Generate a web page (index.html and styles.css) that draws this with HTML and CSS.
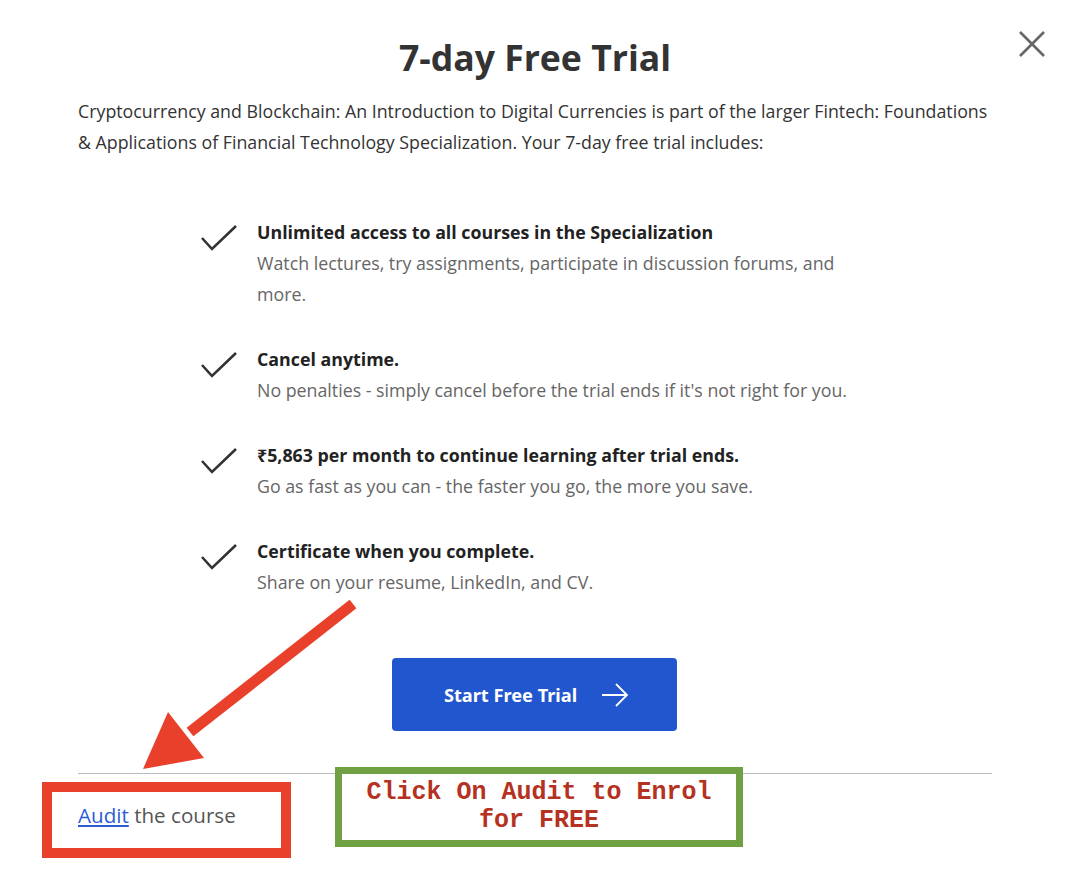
FILE: index.html
```html
<!DOCTYPE html>
<html>
<head>
<meta charset="utf-8">
<link rel="stylesheet" href="styles.css">
</head>
<body>
<div class="modal">
  <button class="close" aria-label="Close">
    <svg width="28" height="28" viewBox="0 0 28 28"><path d="M2 2 L26 26 M26 2 L2 26" stroke="#666" stroke-width="2.6" fill="none"/></svg>
  </button>
  <h1 class="title">7-day Free Trial</h1>
  <p class="intro">Cryptocurrency and Blockchain: An Introduction to Digital Currencies is part of the larger Fintech: Foundations &amp; Applications of Financial Technology Specialization. Your 7-day free trial includes:</p>
  <ul class="features">
    <li class="feature">
      <svg class="check" width="38" height="28" viewBox="0 0 38 28"><path d="M2 14 L12 25 L36 2" stroke="#333" stroke-width="2.6" fill="none"/></svg>
      <div class="ftext">
        <div class="fhead">Unlimited access to all courses in the Specialization</div>
        <div class="fsub">Watch lectures, try assignments, participate in discussion forums, and more.</div>
      </div>
    </li>
    <li class="feature">
      <svg class="check" width="38" height="28" viewBox="0 0 38 28"><path d="M2 14 L12 25 L36 2" stroke="#333" stroke-width="2.6" fill="none"/></svg>
      <div class="ftext">
        <div class="fhead">Cancel anytime.</div>
        <div class="fsub">No penalties - simply cancel before the trial ends if it's not right for you.</div>
      </div>
    </li>
    <li class="feature">
      <svg class="check" width="38" height="28" viewBox="0 0 38 28"><path d="M2 14 L12 25 L36 2" stroke="#333" stroke-width="2.6" fill="none"/></svg>
      <div class="ftext">
        <div class="fhead">₹5,863 per month to continue learning after trial ends.</div>
        <div class="fsub">Go as fast as you can - the faster you go, the more you save.</div>
      </div>
    </li>
    <li class="feature">
      <svg class="check" width="38" height="28" viewBox="0 0 38 28"><path d="M2 14 L12 25 L36 2" stroke="#333" stroke-width="2.6" fill="none"/></svg>
      <div class="ftext">
        <div class="fhead">Certificate when you complete.</div>
        <div class="fsub">Share on your resume, LinkedIn, and CV.</div>
      </div>
    </li>
  </ul>
  <div class="cta-row">
    <button class="cta">Start Free Trial
      <svg width="28" height="24" viewBox="0 0 28 24"><path d="M1 12 H26 M15 1 L26 12 L15 23" stroke="#fff" stroke-width="1.8" fill="none"/></svg>
    </button>
  </div>
  <hr class="divider">
  <div class="audit"><a href="#">Audit</a> the course</div>

  <div class="redbox"></div>
  <div class="greenbox">Click On Audit to Enrol<br>for FREE</div>
  <svg class="arrow" width="240" height="190" viewBox="0 0 240 190">
    <path d="M213 6 L50 134" stroke="#e8402a" stroke-width="11" fill="none" stroke-linecap="butt"/>
    <polygon points="3,171 28,114 64,160" fill="#e8402a"/>
  </svg>
</div>
</body>
</html>
```
FILE: styles.css
```css
html, body {
  margin: 0;
  padding: 0;
  background: #fff;
}
body {
  font-family: "Open Sans", "Noto Sans", sans-serif;
  color: #333;
}
.modal {
  position: relative;
  width: 914px;
  padding: 32px 0 0 78px;
  height: 849px;
}
.close {
  position: absolute;
  left: 1018px;
  top: 30px;
  background: none;
  border: 0;
  padding: 0;
  width: 28px;
  height: 28px;
}
.title {
  margin: 0;
  text-align: center;
  font-size: 35.6px;
  font-weight: 700;
  line-height: 50px;
  color: #333;
}
.intro {
  margin: 14px 0 0;
  font-size: 17.8px;
  line-height: 31px;
  color: #333;
}
.features {
  list-style: none;
  margin: 59px 0 0;
  padding: 0 0 0 122px;
  display: flex;
  flex-direction: column;
  gap: 34px;
}
.feature {
  display: flex;
  align-items: flex-start;
  gap: 19px;
}
.check {
  flex: none;
  margin-top: 7px;
}
.ftext {
  width: 610px;
}
.fhead {
  font-weight: 700;
  font-size: 17.8px;
  line-height: 31px;
  color: #222;
}
.fsub {
  font-size: 17.8px;
  line-height: 31px;
  color: #666;
}
.cta-row {
  display: flex;
  justify-content: center;
  margin-top: 60px;
}
.cta {
  display: flex;
  align-items: center;
  gap: 24px;
  width: 285px;
  height: 73px;
  justify-content: center;
  background: #2256cf;
  color: #fff;
  border: 0;
  border-radius: 4px;
  font-family: "Noto Sans", "Open Sans", sans-serif;
  font-weight: 700;
  font-size: 18.2px;
  padding: 0 0 0 4px;
  margin-left: -1px;
}
.divider {
  margin: 42px 0 0;
  border: 0;
  border-top: 1px solid #bbb;
  width: 914px;
}
.audit {
  margin-top: 28px;
  font-size: 20.6px;
  line-height: 26px;
  color: #555;
}
.audit a {
  color: #2a5bd7;
  text-decoration: underline;
}
.redbox {
  position: absolute;
  left: 42px;
  top: 782px;
  width: 229px;
  height: 56px;
  border: 10px solid #e8402a;
}
.greenbox {
  position: absolute;
  left: 335px;
  top: 767px;
  width: 394px;
  height: 66px;
  border: 7px solid #6fa044;
  background: #fff;
  box-sizing: content-box;
  font-family: "Liberation Mono", "DejaVu Sans Mono", monospace;
  font-weight: 700;
  font-size: 25px;
  line-height: 28px;
  color: #b53222;
  text-align: center;
  display: flex;
  align-items: center;
  justify-content: center;
}
.arrow {
  position: absolute;
  left: 140px;
  top: 598px;
}
```
